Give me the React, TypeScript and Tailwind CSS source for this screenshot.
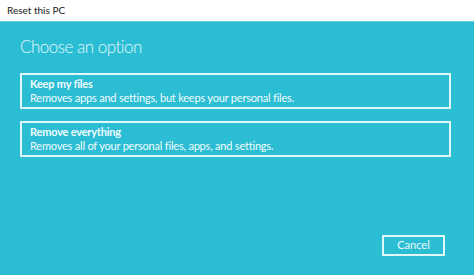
import React from 'react';

const options = [
  { title: 'Keep my files', desc: 'Removes apps and settings, but keeps your personal files.' },
  { title: 'Remove everything', desc: 'Removes all of your personal files, apps, and settings.' }
];

export default function App() {
  return (
    <div
      className="w-[474px] h-[275px] flex flex-col bg-white overflow-hidden"
      style={{ fontFamily: 'Lato, "Open Sans", sans-serif' }}
    >
      <div className="h-[21px] flex items-center pl-[7px] text-[10px] text-[#1a1a1a]">
        Reset this PC
      </div>
      <div className="flex-1 flex flex-col bg-[#2bbdd4] border-t border-[#5fd0e2] px-[20px]">
        <h1 className="mt-[14px] text-[17px] font-light leading-[22px] text-[#e3f8fb] tracking-[-0.5px]">
          Choose an option
        </h1>
        <div className="mt-[15px] flex flex-col gap-[12px]">
          {options.map(o => (
            <button
              key={o.title}
              className="w-[431px] h-[36px] border-2 border-[#e0f7fa] text-left pl-[8px] flex flex-col justify-center text-[#f2fcfd] tracking-[-0.2px]"
            >
              <span className="text-[11px] font-bold leading-[14px]">{o.title}</span>
              <span className="text-[11px] leading-[14px]">{o.desc}</span>
            </button>
          ))}
        </div>
        <div className="mt-auto mb-[19px] flex justify-end pr-[9px]">
          <button className="w-[63px] h-[21px] border-2 border-[#e0f7fa] text-[11px] text-[#eafafc]">
            Cancel
          </button>
        </div>
      </div>
    </div>
  );
}
